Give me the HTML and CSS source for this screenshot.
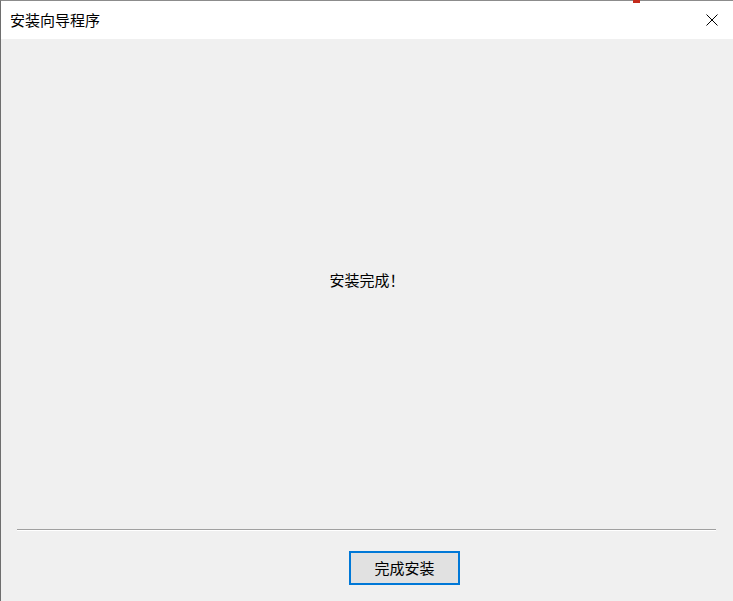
FILE: index.html
```html
<!DOCTYPE html>
<html lang="zh-CN">
<head>
<meta charset="utf-8">
<title>安装向导程序</title>
<link rel="stylesheet" href="styles.css">
</head>
<body>
<div class="window">
  <div class="titlebar">
    <span class="title">安装向导程序</span>
    <span class="close" aria-label="关闭">
      <svg width="12" height="12" viewBox="0 0 12 12"><path d="M0.5 0.5 L11.5 11.5 M11.5 0.5 L0.5 11.5" stroke="#000" stroke-width="1" fill="none"/></svg>
    </span>
  </div>
  <div class="content">
    <div class="main">
      <span class="message">安装完成！</span>
    </div>
    <div class="separator"></div>
    <div class="footer">
      <button class="finish">完成安装</button>
    </div>
  </div>
  <span class="mark"></span>
</div>
</body>
</html>
```

FILE: styles.css
```css
html, body {
  margin: 0;
  padding: 0;
  height: 100%;
  background: #f0f0f0;
}
body {
  font-family: "Noto Sans CJK SC", "Microsoft YaHei", sans-serif;
  font-size: 15px;
  color: #000;
}
.window {
  position: relative;
  height: 601px;
  box-sizing: border-box;
  border-top: 1px solid #8c8c8c;
  border-left: 1px solid #6e6e6e;
  display: flex;
  flex-direction: column;
}
.titlebar {
  height: 38px;
  background: #fff;
  display: flex;
  align-items: center;
  justify-content: space-between;
  padding: 0 15px 0 9px;
  flex: none;
}
.title {
  line-height: 20px;
}
.close {
  width: 12px;
  height: 12px;
  display: flex;
}
.content {
  flex: 1;
  display: flex;
  flex-direction: column;
}
.main {
  height: 490px;
  display: flex;
  align-items: center;
  justify-content: center;
  padding-bottom: 8px;
  box-sizing: border-box;
}
.message {
  line-height: 20px;
}
.separator {
  margin: 0 17px 0 16px;
  border-top: 1px solid #a0a0a0;
  border-bottom: 1px solid #fff;
}
.footer {
  display: flex;
  padding: 20px 0 0 348px;
}
.finish {
  width: 111px;
  height: 34px;
  box-sizing: border-box;
  border: 2px solid #0078d7;
  background: #e1e1e1;
  font-family: inherit;
  font-size: 15px;
  color: #000;
  padding: 0;
  margin: 0;
  line-height: 20px;
}
.mark {
  position: absolute;
  top: -1px;
  left: 632px;
  width: 7px;
  height: 3px;
  background: #c42b1c;
}
```
